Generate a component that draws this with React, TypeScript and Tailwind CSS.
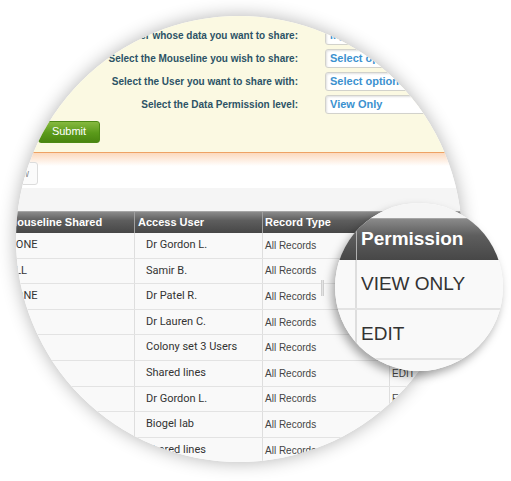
import React from "react";

type Row = {
  shared: string;
  user: string;
  record: string;
  permission: string;
};

// permission cells of the first rows sit under the magnifier, so they stay blank
const rows: Row[] = [
  { shared: "NONE", user: "Dr Gordon L.", record: "All Records", permission: "" },
  { shared: "ALL", user: "Samir B.", record: "All Records", permission: "" },
  { shared: "NONE", user: "Dr Patel R.", record: "All Records", permission: "" },
  { shared: "ALL", user: "Dr Lauren C.", record: "All Records", permission: "" },
  { shared: "", user: "Colony set 3 Users", record: "All Records", permission: "" },
  { shared: "", user: "Shared lines", record: "All Records", permission: "EDIT" },
  { shared: "", user: "Dr Gordon L.", record: "All Records", permission: "EDIT" },
  { shared: "", user: "Biogel lab", record: "All Records", permission: "VIEW ONLY" },
  { shared: "", user: "Shared lines", record: "All Records", permission: "EDIT" },
];

const formRows = [
  { label: "Select the User whose data you want to share:", value: "My Data" },
  { label: "Select the Mouseline you wish to share:", value: "Select options" },
  { label: "Select the User you want to share with:", value: "Select options" },
  { label: "Select the Data Permission level:", value: "View Only" },
];

const headerBg =
  "bg-[linear-gradient(to_bottom,#8a8a8a,#5e5e5e_40%,#474747)] border-t border-[#a5a5a5]";

const App: React.FC = () => {
  return (
    <div className="relative w-[511px] h-[481px] bg-white overflow-hidden font-['Liberation_Sans',Arial,sans-serif]">
      {/* Main round crop of the page */}
      <div className="absolute left-[16px] top-[16px] w-[446px] h-[446px] rounded-full overflow-hidden bg-white shadow-[0_0_18px_rgba(0,0,0,0.3)]">
        <div className="-ml-[16px] -mt-[16px] w-[511px]">
          {/* Share form */}
          <div className="h-[153px] bg-[#fbf9e2] border-b border-[#eea264] pt-[26px]">
            {formRows.map((r) => (
              <div key={r.label} className="flex items-center h-[19px] mb-[4px]">
                <div className="w-[298px] text-right text-[10px] font-bold text-[#2c5366] whitespace-nowrap">
                  {r.label}
                </div>
                <div className="ml-[27px] w-[170px] h-[19px] flex items-center bg-white border border-[#d2d2cc] rounded-[3px] shadow-[inset_1px_1px_2px_rgba(0,0,0,0.12)] pl-[4px] text-[11px] font-bold text-[#3b91cf]">
                  {r.value}
                </div>
              </div>
            ))}
            <button className="ml-[38px] mt-[1px] w-[62px] h-[22px] rounded-[3px] bg-[linear-gradient(to_bottom,#86b93f,#5a9a1a_55%,#4a8610)] border border-[#4d8a15] text-white text-[11px] leading-none">
              Submit
            </button>
          </div>

          {/* Toolbar */}
          <div className="h-[35px] bg-[linear-gradient(to_bottom,#fcd9bd,#fff_13px)] pt-[9px]">
            <div className="-ml-[2px] w-[40px] h-[23px] flex items-center justify-end pr-[8px] bg-[#fbfbfb] border border-[#dcdcdc] rounded-[3px] text-[10px] text-[#888]">
              View
            </div>
          </div>
          <div className="h-[23px] bg-[#f5f5f5]" />

          {/* Table */}
          <div className="relative">
            <div className={`flex h-[22px] items-center text-[11px] font-bold text-white ${headerBg}`}>
              <div className="w-[135px] h-full flex items-center pl-[8px] border-r border-[#a0a0a0]">Mouseline Shared</div>
              <div className="w-[128px] h-full flex items-center pl-[3px] border-r border-[#a0a0a0]">Access User</div>
              <div className="w-[127px] h-full flex items-center pl-[2px] border-r border-[#a0a0a0]">Record Type</div>
              <div className="flex-1 h-full" />
            </div>
            {rows.map((r, i) => (
              <div key={i} className="flex h-[25.6px] items-center bg-[#f9f9f9] border-b border-[#e3e3e3]">
                <div className="w-[135px] h-full flex items-center pl-[8px] border-r border-[#dedede] text-[11px] text-[#333] font-['Roboto',sans-serif]">
                  {r.shared}
                </div>
                <div className="w-[128px] h-full flex items-center pl-[11px] border-r border-[#dedede] text-[11px] text-[#333] font-['Roboto',sans-serif]">
                  {r.user}
                </div>
                <div className="w-[127px] h-full flex items-center pl-[2px] border-r border-[#dedede] text-[10px] text-[#444]">
                  {r.record}
                </div>
                <div className="flex-1 h-full flex items-center pl-[2px] text-[10px] text-[#444]">
                  {r.permission}
                </div>
              </div>
            ))}
            <div className="absolute left-[321px] top-[69px] w-[3px] h-[16px] bg-[#e4e4e4] border-x border-[#d0d0d0]" />
          </div>
        </div>
      </div>

      {/* Magnifier */}
      <div className="absolute left-[335px] top-[203px] w-[168px] h-[168px] rounded-full overflow-hidden bg-white shadow-[-3px_5px_10px_rgba(0,0,0,0.35)]">
        <div className="h-[15px] bg-[#f5f5f5]" />
        <div className={`flex h-[42px] text-[19px] font-bold text-white ${headerBg}`}>
          <div className="w-[22px] h-full border-r border-[#b0b0b0]" />
          <div className="flex-1 h-full flex items-center pl-[4px]">Permission</div>
        </div>
        {["VIEW ONLY", "EDIT", ""].map((p, i) => (
          <div key={i} className="flex h-[50px] bg-[#f9f9f9] border-b-2 border-[#e3e3e3]">
            <div className="w-[22px] h-full border-r-2 border-[#dedede]" />
            <div className="flex-1 h-full flex items-center pl-[4px] text-[19px] text-[#333]">{p}</div>
          </div>
        ))}
      </div>
    </div>
  );
};

export default App;
